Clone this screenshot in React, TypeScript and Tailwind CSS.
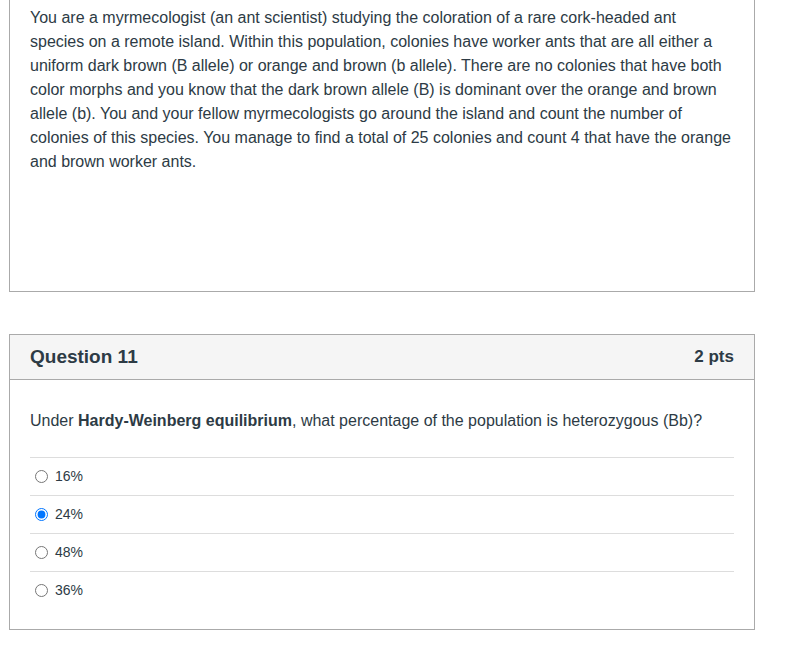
import React from "react";

export default function App() {
  const options = ["16%", "24%", "48%", "36%"];
  return (
    <div className="min-h-[646px] w-[796px] bg-white text-[#2d3b45]" style={{ fontFamily: '"Liberation Sans", Arial, sans-serif' }}>
      <div className="ml-[9px] w-[746px]">
        <div className="h-[292px] border-x border-b border-[#aaaaaa] pl-[20px] pr-[21px] pt-[6px]">
          <p className="text-[16px] leading-[24px]">
            You are a myrmecologist (an ant scientist) studying the coloration of a rare cork-headed ant species on a remote island. Within this population, colonies have worker ants that are all either a uniform dark brown (B allele) or orange and brown (b allele). There are no colonies that have both color morphs and you know that the dark brown allele (B) is dominant over the orange and brown allele (b). You and your fellow myrmecologists go around the island and count the number of colonies of this species. You manage to find a total of 25 colonies and count 4 that have the orange and brown worker ants.
          </p>
        </div>
        <div className="mt-[42px] border border-[#aaaaaa]">
          <div className="flex h-[45px] items-center justify-between border-b border-[#aaaaaa] bg-[#f5f5f5] pl-[20px] pr-[20px]">
            <span className="text-[19px] font-bold">Question 11</span>
            <span className="text-[17px] font-bold">2 pts</span>
          </div>
          <div className="px-[20px] pb-[20px] pt-[29px]">
            <p className="mb-[24px] text-[16px] leading-[24px]">
              Under <b>Hardy-Weinberg equilibrium</b>, what percentage of the population is heterozygous (Bb)?
            </p>
            {options.map((o) => (
              <label key={o} className="flex h-[38px] items-center border-t border-[#dddddd] text-[14px]">
                <input type="radio" name="q11" defaultChecked={o === "24%"} className="ml-[5px] mr-[7px] h-[13px] w-[13px]" />
                <span>{o}</span>
              </label>
            ))}
          </div>
        </div>
      </div>
    </div>
  );
}
